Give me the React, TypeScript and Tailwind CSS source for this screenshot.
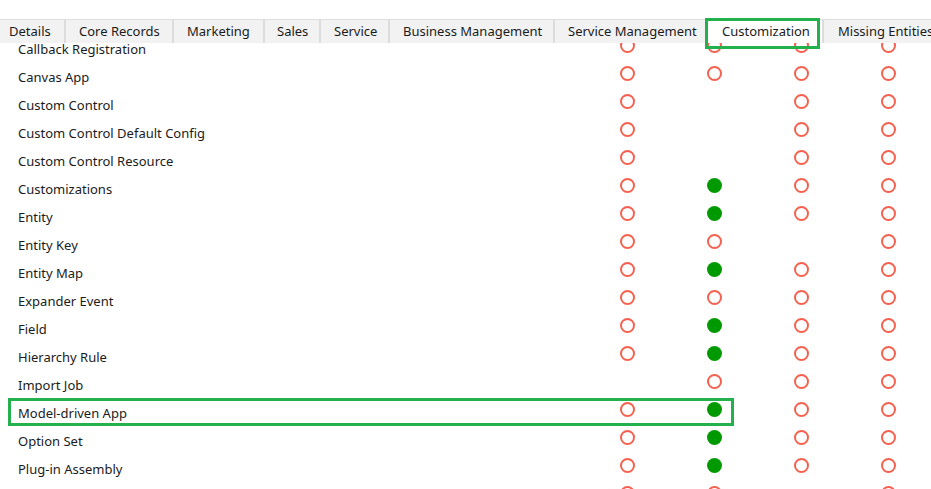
import React from 'react'

type Mark = 'o' | 'g' | '-'

const tabs = [
  { label: 'Details', w: 'w-[64px]', pl: 'pl-[9px]' },
  { label: 'Core Records', w: 'w-[108px]', pl: 'pl-[13px]' },
  { label: 'Marketing', w: 'w-[91px]', pl: 'pl-[13px]' },
  { label: 'Sales', w: 'w-[56px]', pl: 'pl-[12px]' },
  { label: 'Service', w: 'w-[69px]', pl: 'pl-[13px]' },
  { label: 'Business Management', w: 'w-[165px]', pl: 'pl-[13px]' },
  { label: 'Service Management', w: 'w-[153px]', pl: 'pl-[13px]' },
  { label: 'Customization', w: 'w-[116px]', pl: 'pl-[14px]', active: true },
  { label: 'Missing Entities', w: 'w-[140px]', pl: 'pl-[14px]' },
]

const rows: { name: string; marks: Mark[]; highlight?: boolean }[] = [
  { name: 'Callback Registration', marks: ['o', 'o', 'o', 'o'] },
  { name: 'Canvas App', marks: ['o', 'o', 'o', 'o'] },
  { name: 'Custom Control', marks: ['o', '-', 'o', 'o'] },
  { name: 'Custom Control Default Config', marks: ['o', '-', 'o', 'o'] },
  { name: 'Custom Control Resource', marks: ['o', '-', 'o', 'o'] },
  { name: 'Customizations', marks: ['o', 'g', 'o', 'o'] },
  { name: 'Entity', marks: ['o', 'g', 'o', 'o'] },
  { name: 'Entity Key', marks: ['o', 'o', '-', 'o'] },
  { name: 'Entity Map', marks: ['o', 'g', 'o', 'o'] },
  { name: 'Expander Event', marks: ['o', 'o', 'o', 'o'] },
  { name: 'Field', marks: ['o', 'g', 'o', 'o'] },
  { name: 'Hierarchy Rule', marks: ['o', 'g', 'o', 'o'] },
  { name: 'Import Job', marks: ['-', 'o', 'o', 'o'] },
  { name: 'Model-driven App', marks: ['o', 'g', 'o', 'o'], highlight: true },
  { name: 'Option Set', marks: ['o', 'g', 'o', 'o'] },
  { name: 'Plug-in Assembly', marks: ['o', 'g', 'o', 'o'] },
  // next row is scrolled out of view, only its marks peek in
  { name: '', marks: ['o', 'o', '-', 'o'] },
]

function Dot({ mark }: { mark: Mark }) {
  if (mark === '-') return null
  if (mark === 'g') return <span className="block h-[15px] w-[15px] rounded-full bg-[#009a00]" />
  return <span className="block h-[15px] w-[15px] rounded-full border-2 border-[#f5604f]" />
}

function TabBar() {
  return (
    <div className="relative z-10 mt-[19px] flex h-[24px] shrink-0 overflow-hidden whitespace-nowrap border-t border-[#dedede] bg-[#f2f2f2]">
      {tabs.map((t, i) => (
        <div
          key={t.label}
          className={`relative flex shrink-0 items-center pt-px ${t.w} ${t.pl} ${i > 0 ? 'border-l-2 border-[#dcdcdc]' : ''} ${t.active ? 'bg-white' : ''}`}
        >
          {t.label}
        </div>
      ))}
    </div>
  )
}

export default function App() {
  return (
    <div
      className="relative flex h-[489px] w-full flex-col overflow-hidden bg-white text-[13px] text-[#1b1b1b]"
      style={{ fontFamily: '"Noto Sans", "Open Sans", sans-serif' }}
    >
      <TabBar />

      {/* Selected tab annotation */}
      <div className="pointer-events-none absolute left-[705px] top-[18px] z-20 h-[31px] w-[115px] border-[3px] border-[#22b14c]" />

      {/* Scrolled entity list */}
      <div className="relative flex-1 overflow-hidden">
        <div className="-mt-[8px]">
          {rows.map((r, i) => (
            <div key={i} className="relative flex h-[28px] items-center">
              <div className="w-[584px] shrink-0 pl-[18px] pt-[2px]">{r.name}</div>
              {r.marks.map((m, j) => (
                <div key={j} className="flex w-[87px] shrink-0 justify-center self-start pt-[3px]">
                  <Dot mark={m} />
                </div>
              ))}
              {r.highlight && (
                <div className="pointer-events-none absolute -top-px left-[8px] h-[28px] w-[726px] border-[3px] border-[#22b14c]" />
              )}
            </div>
          ))}
        </div>
      </div>
    </div>
  )
}
